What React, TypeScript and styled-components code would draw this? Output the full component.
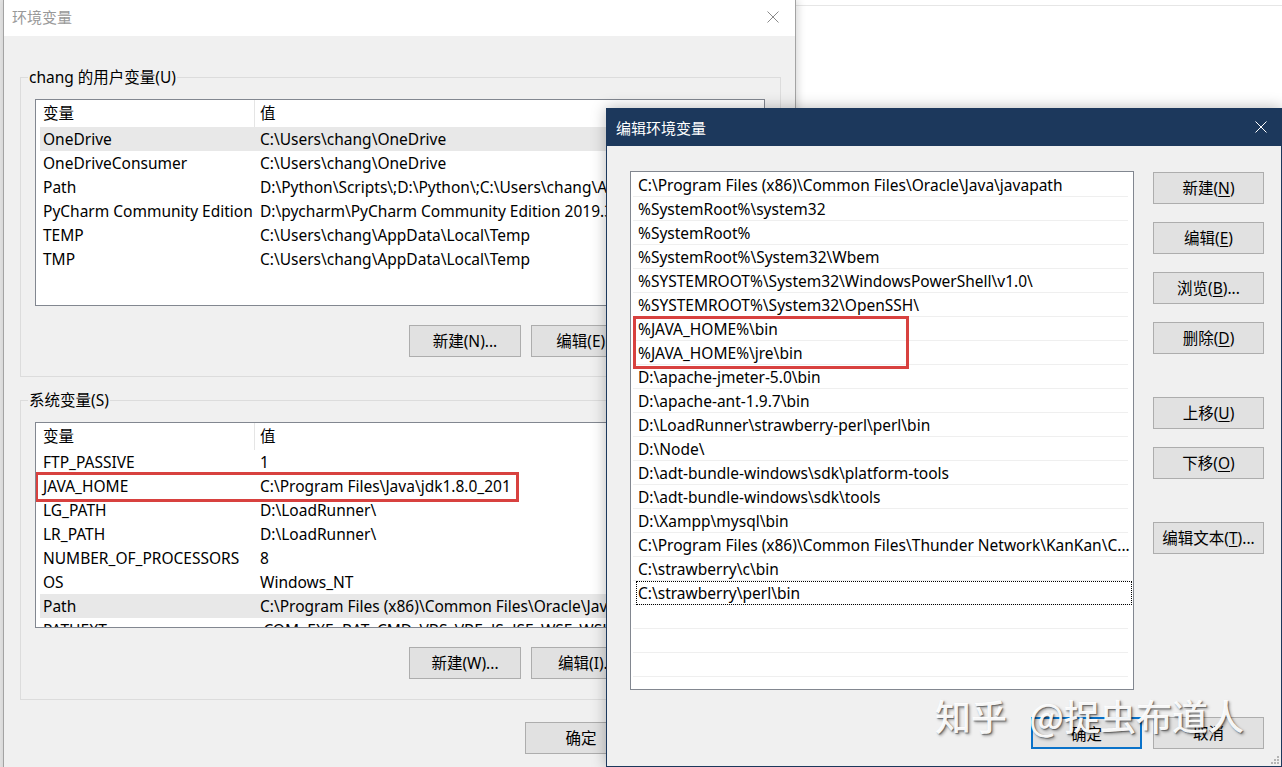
import styled, { createGlobalStyle, css } from "styled-components";

const GlobalStyle = createGlobalStyle`
  * { box-sizing: border-box; }
  html, body {
    margin: 0;
    padding: 0;
    width: 1282px;
    height: 767px;
    overflow: hidden;
    background: #fff;
  }
  body {
    font-family: "Noto Sans", "Noto Sans CJK SC", sans-serif;
    font-size: 15.5px;
    color: #000;
  }
`;

const Desktop = styled.div`
  position: relative;
  width: 1282px;
  height: 767px;
  overflow: hidden;
  background: #fff;
`;

const BackLine = styled.div`
  position: absolute;
  left: 0;
  right: 0;
  top: 5px;
  border-top: 1px solid #e6e6e6;
`;

const EdgeStrip = styled.div`
  position: absolute;
  left: 0;
  top: 0;
  bottom: 0;
  width: 3px;
  background: #e4e4e4;
`;

const Win = styled.div<{ $x: number; $y: number; $w: number; $h: number; $active?: boolean }>`
  position: absolute;
  left: ${(p) => p.$x}px;
  top: ${(p) => p.$y}px;
  width: ${(p) => p.$w}px;
  height: ${(p) => p.$h}px;
  display: flex;
  flex-direction: column;
  background: #f0f0f0;
  ${(p) =>
    p.$active
      ? css`
          border: 1px solid #1c385c;
          box-shadow: 0 0 14px rgba(0, 0, 0, 0.28);
        `
      : css`
          border: 1px solid #a3a3a3;
          border-top: none;
          box-shadow: 2px 0 8px rgba(0, 0, 0, 0.16);
        `}
`;

const TitleBar = styled.div<{ $active?: boolean; $h: number }>`
  height: ${(p) => p.$h}px;
  flex: none;
  display: flex;
  align-items: center;
  justify-content: space-between;
  background: ${(p) => (p.$active ? "#1c385c" : "#fff")};
  color: ${(p) => (p.$active ? "#fff" : "#999")};
  padding-left: ${(p) => (p.$active ? 9 : 8)}px;
  padding-bottom: ${(p) => (p.$active ? 1 : 3)}px;
  font-size: 15px;
`;

const CloseBox = styled.div<{ $w: number }>`
  width: ${(p) => p.$w}px;
  height: 100%;
  display: flex;
  align-items: center;
  justify-content: center;
`;

const LeftBody = styled.div`
  padding: 41px 14px 0 16px;
  display: flex;
  flex-direction: column;
`;

const GroupBox = styled.div<{ $gap?: number; $padBottom: number }>`
  position: relative;
  margin-top: ${(p) => p.$gap ?? 0}px;
  border: 1px solid #dcdcdc;
  padding: 21px 15px ${(p) => p.$padBottom}px 14px;
`;

const GroupLabel = styled.span`
  position: absolute;
  top: -11px;
  left: 7px;
  padding: 0 1px;
  line-height: 20px;
  background: #f0f0f0;
`;

const ListView = styled.div<{ $h: number }>`
  position: relative;
  height: ${(p) => p.$h}px;
  background: #fff;
  border: 1px solid #828790;
  overflow: hidden;
`;

const HeaderRow = styled.div`
  display: grid;
  grid-template-columns: 214px 1fr;
  margin-left: 4px;
  height: 27px;
  line-height: 27px;
`;

const HeaderCell = styled.div<{ $sep?: boolean }>`
  padding-left: ${(p) => (p.$sep ? 5 : 3)}px;
  border-left: ${(p) => (p.$sep ? "1px solid #e5e5e5" : "none")};
`;

const VarRow = styled.div<{ $selected?: boolean }>`
  display: grid;
  grid-template-columns: 214px 1fr;
  margin-left: 4px;
  height: 24px;
  line-height: 24px;
  background: ${(p) => (p.$selected ? "#e8e8e8" : "transparent")};
`;

const VarCell = styled.div<{ $value?: boolean }>`
  padding-left: ${(p) => (p.$value ? 6 : 3)}px;
  white-space: nowrap;
  overflow: hidden;
`;

const Mark = styled.div<{ $x: number; $y: number; $w: number; $h: number }>`
  position: absolute;
  left: ${(p) => p.$x}px;
  top: ${(p) => p.$y}px;
  width: ${(p) => p.$w}px;
  height: ${(p) => p.$h}px;
  border: 3px solid #d8413f;
  pointer-events: none;
`;

const ButtonRow = styled.div<{ $top: number; $padRight?: number }>`
  display: flex;
  justify-content: flex-end;
  gap: 10px;
  margin-top: ${(p) => p.$top}px;
  padding-right: ${(p) => p.$padRight ?? 0}px;
`;

const Button = styled.button<{ $w?: number; $isDefault?: boolean; $gapBefore?: number }>`
  width: ${(p) => p.$w ?? 112}px;
  height: 32px;
  flex: none;
  margin: ${(p) => p.$gapBefore ?? 0}px 0 0 0;
  padding: 0;
  background: #e1e1e1;
  border: 1px solid #adadad;
  font: inherit;
  color: #000;
  line-height: 30px;
  white-space: nowrap;
  ${(p) =>
    p.$isDefault &&
    css`
      border: 2px solid #0a72c9;
    `}
  u {
    text-decoration-thickness: 1px;
    text-underline-offset: 2px;
  }
`;

const RightBody = styled.div`
  padding: 25px 0 0 23px;
  display: grid;
  grid-template-columns: 504px 111px;
  column-gap: 19px;
  align-items: start;
`;

const PathList = styled.div`
  position: relative;
  height: 519px;
  background: #fff;
  border: 1px solid #828790;
  padding-top: 1px;
  overflow: hidden;
`;

const PathRow = styled.div<{ $focused?: boolean }>`
  position: relative;
  margin: 0 5px 0 2px;
  height: 24px;
  line-height: 25px;
  padding-left: 5px;
  border-bottom: 1px solid #efefef;
  white-space: nowrap;
  ${(p) =>
    p.$focused &&
    css`
      &::after {
        content: "";
        position: absolute;
        left: 3px;
        right: -4px;
        top: 0;
        bottom: -1px;
        border: 1px dotted #000;
      }
    `}
`;

const ButtonColumn = styled.div`
  display: flex;
  flex-direction: column;
  padding-top: 1px;
`;

const Footer = styled.div`
  grid-column: 1 / 3;
  display: flex;
  justify-content: flex-end;
  gap: 11px;
  margin-top: 27px;
`;

const Watermark = styled.div`
  position: absolute;
  left: 935px;
  top: 693px;
  display: flex;
  gap: 22px;
  font-family: "Noto Sans CJK SC", "Noto Sans", sans-serif;
  font-size: 36px;
  font-weight: 500;
  line-height: 44px;
  color: rgba(255, 255, 255, 0.94);
  text-shadow: 1px 1px 1px rgba(0, 0, 0, 0.4), 2px 2px 3px rgba(0, 0, 0, 0.35);
  pointer-events: none;
`;

const Grip = styled.svg`
  position: absolute;
  right: 2px;
  bottom: 2px;
`;

const CloseIcon = ({ color }: { color: string }) => (
  <svg width="12" height="12" viewBox="0 0 12 12">
    <path d="M0.5 0.5 L11.5 11.5 M11.5 0.5 L0.5 11.5" stroke={color} strokeWidth="1" fill="none" />
  </svg>
);

const userVars = [
  ["OneDrive", "C:\\Users\\chang\\OneDrive"],
  ["OneDriveConsumer", "C:\\Users\\chang\\OneDrive"],
  ["Path", "D:\\Python\\Scripts\\;D:\\Python\\;C:\\Users\\chang\\AppData\\Local\\Microsoft\\WindowsApps;"],
  ["PyCharm Community Edition", "D:\\pycharm\\PyCharm Community Edition 2019.3.3\\bin;"],
  ["TEMP", "C:\\Users\\chang\\AppData\\Local\\Temp"],
  ["TMP", "C:\\Users\\chang\\AppData\\Local\\Temp"],
];

const systemVars = [
  ["FTP_PASSIVE", "1"],
  ["JAVA_HOME", "C:\\Program Files\\Java\\jdk1.8.0_201"],
  ["LG_PATH", "D:\\LoadRunner\\"],
  ["LR_PATH", "D:\\LoadRunner\\"],
  ["NUMBER_OF_PROCESSORS", "8"],
  ["OS", "Windows_NT"],
  ["Path", "C:\\Program Files (x86)\\Common Files\\Oracle\\Java\\javapath;%SystemRoot%\\system32;"],
  ["PATHEXT", ".COM;.EXE;.BAT;.CMD;.VBS;.VBE;.JS;.JSE;.WSF;.WSH;.MSC"],
];

const paths = [
  "C:\\Program Files (x86)\\Common Files\\Oracle\\Java\\javapath",
  "%SystemRoot%\\system32",
  "%SystemRoot%",
  "%SystemRoot%\\System32\\Wbem",
  "%SYSTEMROOT%\\System32\\WindowsPowerShell\\v1.0\\",
  "%SYSTEMROOT%\\System32\\OpenSSH\\",
  "%JAVA_HOME%\\bin",
  "%JAVA_HOME%\\jre\\bin",
  "D:\\apache-jmeter-5.0\\bin",
  "D:\\apache-ant-1.9.7\\bin",
  "D:\\LoadRunner\\strawberry-perl\\perl\\bin",
  "D:\\Node\\",
  "D:\\adt-bundle-windows\\sdk\\platform-tools",
  "D:\\adt-bundle-windows\\sdk\\tools",
  "D:\\Xampp\\mysql\\bin",
  "C:\\Program Files (x86)\\Common Files\\Thunder Network\\KanKan\\C...",
  "C:\\strawberry\\c\\bin",
  "C:\\strawberry\\perl\\bin",
  "",
  "",
  "",
  "",
];

const VarList = ({ rows, height, selected, mark }: { rows: string[][]; height: number; selected: number; mark?: number }) => (
  <ListView $h={height}>
    <HeaderRow>
      <HeaderCell>变量</HeaderCell>
      <HeaderCell $sep>值</HeaderCell>
    </HeaderRow>
    {rows.map(([name, value], i) => (
      <VarRow key={name + i} $selected={i === selected}>
        <VarCell>{name}</VarCell>
        <VarCell $value>{value}</VarCell>
      </VarRow>
    ))}
    {mark !== undefined && <Mark $x={-1} $y={27 + mark * 24 - 2} $w={484} $h={30} />}
  </ListView>
);

const App = () => {
  return (
    <Desktop>
      <GlobalStyle />
      <BackLine />
      <EdgeStrip />

      <Win $x={3} $y={0} $w={793} $h={790}>
        <TitleBar $h={36}>
          <span>环境变量</span>
          <CloseBox $w={44}>
            <CloseIcon color="#8a8a8a" />
          </CloseBox>
        </TitleBar>
        <LeftBody>
          <GroupBox $padBottom={19}>
            <GroupLabel>chang 的用户变量(U)</GroupLabel>
            <VarList rows={userVars} height={207} selected={0} />
            <ButtonRow $top={19}>
              <Button>新建(N)...</Button>
              <Button>编辑(E)...</Button>
              <Button>删除(D)</Button>
            </ButtonRow>
          </GroupBox>
          <GroupBox $gap={23} $padBottom={20}>
            <GroupLabel>系统变量(S)</GroupLabel>
            <VarList rows={systemVars} height={206} selected={6} mark={1} />
            <ButtonRow $top={19}>
              <Button>新建(W)...</Button>
              <Button>编辑(I)...</Button>
              <Button>删除(L)</Button>
            </ButtonRow>
          </GroupBox>
          <ButtonRow $top={22} $padRight={22}>
            <Button>确定</Button>
            <Button>取消</Button>
          </ButtonRow>
        </LeftBody>
      </Win>

      <Win $x={606} $y={108} $w={676} $h={659} $active>
        <TitleBar $h={37} $active>
          <span>编辑环境变量</span>
          <CloseBox $w={40}>
            <CloseIcon color="#fff" />
          </CloseBox>
        </TitleBar>
        <RightBody>
          <PathList>
            {paths.map((p, i) => (
              <PathRow key={i} $focused={i === 17}>
                {p}
              </PathRow>
            ))}
            <Mark $x={2} $y={144} $w={276} $h={53} />
          </PathList>
          <ButtonColumn>
            <Button $w={111}>
              新建(<u>N</u>)
            </Button>
            <Button $w={111} $gapBefore={18}>
              编辑(<u>E</u>)
            </Button>
            <Button $w={111} $gapBefore={18}>
              浏览(<u>B</u>)...
            </Button>
            <Button $w={111} $gapBefore={18}>
              删除(<u>D</u>)
            </Button>
            <Button $w={111} $gapBefore={43}>
              上移(<u>U</u>)
            </Button>
            <Button $w={111} $gapBefore={18}>
              下移(<u>O</u>)
            </Button>
            <Button $w={111} $gapBefore={43}>
              编辑文本(<u>T</u>)...
            </Button>
          </ButtonColumn>
          <Footer>
            <Button $w={111} $isDefault>
              确定
            </Button>
            <Button $w={111}>取消</Button>
          </Footer>
        </RightBody>
        <Grip width="8" height="8" viewBox="0 0 8 8">
          {[
            [6, 0],
            [6, 3],
            [3, 3],
            [6, 6],
            [3, 6],
            [0, 6],
          ].map(([x, y]) => (
            <rect key={`${x}-${y}`} x={x} y={y} width="2" height="2" fill="#b5b5b5" />
          ))}
        </Grip>
      </Win>

      <Watermark>
        <span>知乎</span>
        <span>@捉虫布道人</span>
      </Watermark>
    </Desktop>
  );
};

export default App;
